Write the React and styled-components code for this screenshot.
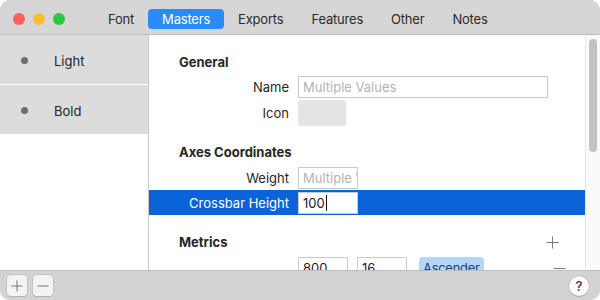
import React from 'react';
import styled, { createGlobalStyle } from 'styled-components';

const Global = createGlobalStyle`
  html, body { margin: 0; padding: 0; background: #fff; }
  body { font-family: Inter, "Noto Sans", "Liberation Sans", sans-serif; font-size: 13px; color: #262626; }
`;

const Window = styled.div`
  width: 600px;
  height: 300px;
  display: flex;
  flex-direction: column;
  border-radius: 10px;
  overflow: hidden;
  background: #d6d6d6;
`;

const TitleBar = styled.div`
  height: 35px;
  flex: none;
  display: flex;
  align-items: center;
  border-bottom: 1px solid #bdbdbd;
  box-sizing: border-box;
  background: #d6d6d6;
  padding: 4px 0 0 13px;
`;

const Lights = styled.div`
  display: flex;
  gap: 8px;
  width: 81px;
`;

const Light = styled.span`
  width: 12px;
  height: 12px;
  border-radius: 50%;
  background: ${p => p.color};
`;

const Tabs = styled.div`
  display: flex;
`;

const Tab = styled.div`
  padding: 0 14px;
  height: 20px;
  line-height: 20px;
  border-radius: 4px;
  letter-spacing: -0.2px;
  color: ${p => (p.active ? '#fff' : '#2b2b2b')};
  background: ${p => (p.active ? '#2a8bf6' : 'transparent')};
`;

const Body = styled.div`
  flex: 1;
  display: flex;
  min-height: 0;
  background: #fff;
`;

const Sidebar = styled.div`
  width: 148px;
  flex: none;
  border-right: 1px solid #c8c8c8;
  background: #fff;
  display: flex;
  flex-direction: column;
  gap: 1px;
`;

const MasterRow = styled.div`
  height: 49px;
  flex: none;
  display: flex;
  align-items: center;
  background: #dcdcdc;
  padding: 2px 0 0 21px;
  box-sizing: border-box;
  gap: 26px;
  color: #262626;
`;

const Dot = styled.span`
  width: 7px;
  height: 7px;
  border-radius: 50%;
  background: #6e6e6e;
`;

const Content = styled.div`
  flex: 1;
  display: flex;
  flex-direction: column;
  overflow: hidden;
  padding-top: 15px;
`;

const Heading = styled.div`
  height: 24px;
  flex: none;
  display: flex;
  align-items: center;
  justify-content: space-between;
  padding: 0 26px 0 30px;
  font-weight: 700;
  color: #262626;
  margin-top: ${p => p.gap || 0}px;
`;

const Row = styled.div`
  height: ${p => p.h || 24}px;
  flex: none;
  display: flex;
  align-items: center;
  gap: 9px;
  background: ${p => (p.selected ? '#0a63d8' : 'transparent')};
  color: ${p => (p.selected ? '#fff' : '#262626')};
  margin-top: ${p => p.gap || 0}px;
`;

const Label = styled.div`
  width: 140px;
  flex: none;
  text-align: right;
`;

const Field = styled.div`
  width: ${p => p.w}px;
  height: 22px;
  box-sizing: border-box;
  border: 1px solid #c9c9c9;
  background: #fff;
  padding: 0 4px;
  display: flex;
  align-items: center;
  overflow: hidden;
  white-space: nowrap;
  color: ${p => (p.placeholder ? '#b4b4b4' : '#1a1a1a')};
  flex: none;
`;

const Caret = styled.span`
  display: inline-block;
  width: 1px;
  height: 16px;
  background: #111;
  margin-left: 1px;
`;

const IconWell = styled.div`
  width: 48px;
  height: 26px;
  border-radius: 3px;
  background: #e4e4e4;
`;

const Tag = styled.div`
  height: 22px;
  line-height: 22px;
  padding: 0 4px;
  border-radius: 4px;
  letter-spacing: -0.3px;
  background: #b5d6fb;
  color: #1d3f6e;
  margin-left: 3px;
`;

const Spacer = styled.div`
  flex: 1;
`;

const Scroller = styled.div`
  width: 15px;
  flex: none;
  border-left: 1px solid #e6e6e6;
  background: #fafafa;
  box-sizing: border-box;
  padding: 4px 3px 0 3px;
`;

const Thumb = styled.div`
  height: 113px;
  border-radius: 4px;
  background: #c2c2c2;
`;

const BottomBar = styled.div`
  height: 30px;
  flex: none;
  border-top: 1px solid #bdbdbd;
  box-sizing: border-box;
  display: flex;
  align-items: center;
  padding: 0 11px 0 7px;
  gap: 6px;
  background: #d3d3d3;
`;

const SmallButton = styled.div`
  width: 20px;
  height: 21px;
  box-sizing: border-box;
  border-radius: 4px;
  background: #f3f3f3;
  box-shadow: 0 0 0 0.5px #b0b0b0, 0 1px 1px rgba(0,0,0,0.12);
  display: flex;
  align-items: center;
  justify-content: center;
`;

const Help = styled.div`
  width: 20px;
  height: 20px;
  border-radius: 50%;
  background: #fbfbfb;
  box-shadow: 0 0 0 0.5px #a8a8a8, 0 1px 1px rgba(0,0,0,0.15);
  display: flex;
  align-items: center;
  justify-content: center;
  font-size: 13px;
  font-weight: 500;
  color: #333;
`;

const Plus = ({ size = 13, color = '#7a7a7a' }) => (
  <svg width={size} height={size} viewBox="0 0 13 13">
    <path d="M6.5 0.5v12M0.5 6.5h12" stroke={color} strokeWidth="1" fill="none" />
  </svg>
);

const Minus = ({ size = 13, color = '#7a7a7a' }) => (
  <svg width={size} height={size} viewBox="0 0 13 13">
    <path d="M0.5 6.5h12" stroke={color} strokeWidth="1" fill="none" />
  </svg>
);

const tabs = ['Font', 'Masters', 'Exports', 'Features', 'Other', 'Notes'];

export default function App() {
  return (
    <>
      <Global />
      <Window>
        <TitleBar>
          <Lights>
            <Light color="#fe5f57" />
            <Light color="#febc2e" />
            <Light color="#28c840" />
          </Lights>
          <Tabs>
            {tabs.map(t => (
              <Tab key={t} active={t === 'Masters'}>{t}</Tab>
            ))}
          </Tabs>
        </TitleBar>
        <Body>
          <Sidebar>
            <MasterRow><Dot />Light</MasterRow>
            <MasterRow><Dot />Bold</MasterRow>
          </Sidebar>
          <Content>
            <Heading>General</Heading>
            <Row gap={1}>
              <Label>Name</Label>
              <Field w={250} placeholder>Multiple Values</Field>
            </Row>
            <Row h={28}>
              <Label>Icon</Label>
              <IconWell />
            </Row>
            <Heading gap={13}>Axes Coordinates</Heading>
            <Row h={25} gap={1}>
              <Label>Weight</Label>
              <Field w={60} placeholder>Multiple V</Field>
            </Row>
            <Row h={25} selected>
              <Label>Crossbar Height</Label>
              <Field w={60}>100<Caret /></Field>
            </Row>
            <Heading gap={15}>
              Metrics
              <Plus />
            </Heading>
            <Row gap={2}>
              <Label />
              <Field w={50}>800</Field>
              <Field w={50}>16</Field>
              <Tag>Ascender</Tag>
              <Spacer />
              <Minus />
              <span style={{ width: 10 }} />
            </Row>
          </Content>
          <Scroller>
            <Thumb />
          </Scroller>
        </Body>
        <BottomBar>
          <SmallButton><Plus size={12} color="#6a6a6a" /></SmallButton>
          <SmallButton><Minus size={12} color="#6a6a6a" /></SmallButton>
          <Spacer />
          <Help>?</Help>
        </BottomBar>
      </Window>
    </>
  );
}
